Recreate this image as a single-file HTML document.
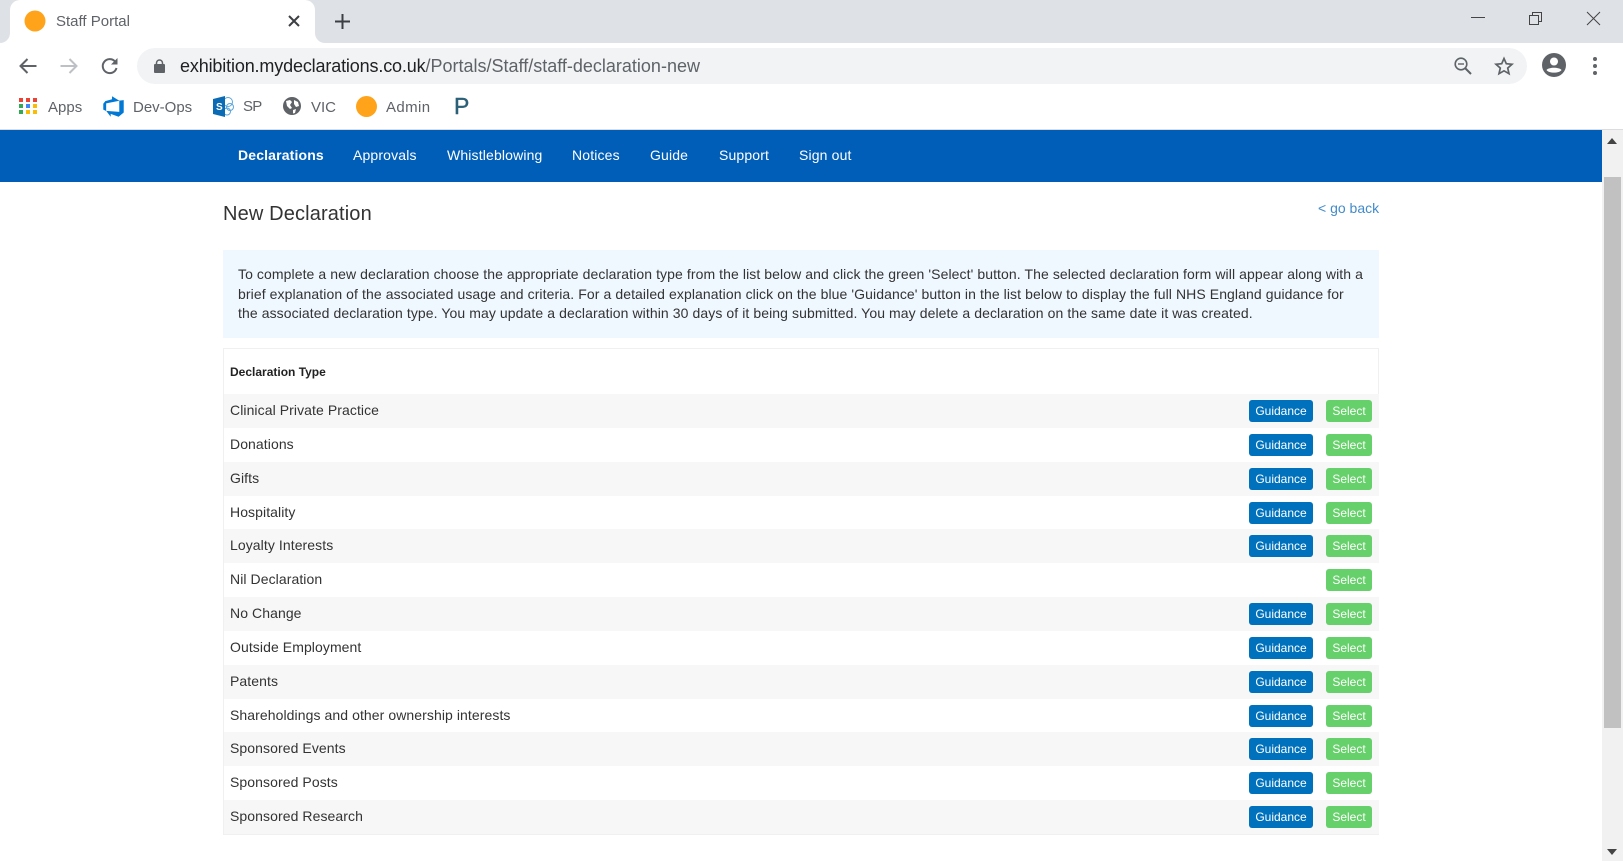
<!DOCTYPE html>
<html lang="en">
<head>
<meta charset="utf-8">
<title>Staff Portal</title>
<style>
html,body{margin:0;padding:0;width:1623px;height:861px;overflow:hidden;background:#fff;font-family:"Liberation Sans",sans-serif;color:#333}
body{filter:blur(.3px)}
.a{position:absolute;white-space:nowrap}
a{text-decoration:none;color:inherit}
#strip{left:0;top:0;width:1623px;height:43px;background:#dee1e6}
#tab{left:10px;top:0;width:305px;height:43px;background:#fff;border-radius:10px 10px 0 0}
#omni{left:137px;top:48px;width:1390px;height:36px;border-radius:18px;background:#f1f3f4}
#url{left:180px;top:55px;font-size:18px;line-height:22px;color:#5f6368}
#url b{font-weight:normal;color:#202124;letter-spacing:-.15px}
.bm{top:97.500px;font-size:15px;line-height:20px;color:#5f6368}
#nav{left:0;top:130px;width:1602px;height:52px;background:#005eb8}
#nav a{position:absolute;top:0;line-height:50px;font-size:14px;letter-spacing:.15px;color:#fff;white-space:nowrap}
#scroll{left:1602px;top:130px;width:21px;height:731px;background:#f1f1f1}
#thumb{left:1604px;top:177px;width:17px;height:551px;background:#c1c1c1}
h1{position:absolute;left:223px;top:200.500px;margin:0;font-size:20px;line-height:26px;letter-spacing:.14px;font-weight:normal;color:#333;white-space:nowrap}
#back{left:1318px;top:199px;font-size:14px;line-height:18px;color:#428bca}
#alert{left:223px;top:250px;width:1156px;height:88px;background:#eff7ff}
#alert div{position:absolute;left:15px;font-size:14px;line-height:20px;letter-spacing:.086px;white-space:nowrap;color:#333}
#tbl{left:223px;top:348px;width:1156px;height:487px;border:1px solid #f0f0f0;box-sizing:border-box}
#th{left:230px;top:363.500px;font-size:12px;line-height:16px;font-weight:bold;color:#222}
.r{position:absolute;left:0;width:1155px;height:34px;font-size:14px;line-height:33px;color:#333}
.r span{position:absolute;left:6px;white-space:nowrap;letter-spacing:.08px}
.g,.s{position:absolute;top:6px;height:22px;line-height:22px;font-size:12px;color:#fff;text-align:center;border-radius:3px}
.g{left:1025px;width:64px;background:#0071bc}
.s{left:1102px;width:46px;background:#66d06a}
svg{position:absolute;overflow:visible}
</style>
</head>
<body>
<div class="a" id="strip"></div>
<div class="a" id="tab"></div>
<svg style="left:0;top:0" width="10" height="43"><path d="M0 43h10V33a10 10 0 0 1-10 10z" fill="#fff"/></svg>
<svg style="left:315px;top:33px" width="10" height="10"><path d="M0 0a10 10 0 0 0 10 10H0z" fill="#fff"/></svg>
<svg style="left:24px;top:10px" width="22" height="22"><circle cx="11" cy="11" r="10.500" fill="#ffa31a"/></svg>
<div class="a" style="left:56px;top:12px;font-size:15px;line-height:20px;color:#5f6368">Staff Portal</div>
<svg style="left:288px;top:15px" width="12" height="12"><path d="M1 1l10 10M11 1L1 11" stroke="#3c4043" stroke-width="2"/></svg>
<svg style="left:335px;top:14px" width="15" height="15"><path d="M7.500 0v15M0 7.500h15" stroke="#3c4043" stroke-width="2"/></svg>
<svg style="left:1471px;top:17px" width="14" height="2"><path d="M0 .5h14" stroke="#444" stroke-width="1"/></svg>
<svg style="left:1529px;top:12px" width="13" height="13"><path d="M.5 3.500h9v9h-9zM3.500 3.500v-3h9v9h-3" fill="none" stroke="#444"/></svg>
<svg style="left:1587px;top:12px" width="13" height="13"><path d="M0 0l13 13M13 0L0 13" stroke="#444" stroke-width="1"/></svg>

<svg style="left:19px;top:57px" width="18" height="18"><path d="M17.500 9H2M8.500 2L1.500 9l7 7" fill="none" stroke="#5f6368" stroke-width="2"/></svg>
<svg style="left:60px;top:57px" width="18" height="18"><path d="M.5 9H16M9.500 2l7 7-7 7" fill="none" stroke="#bdc1c6" stroke-width="2"/></svg>
<svg style="left:101px;top:57px" width="18" height="18"><path d="M15.500 11a7 7 0 1 1-1.500-6.500" fill="none" stroke="#5f6368" stroke-width="2"/><path d="M16.500 1v6.500H10z" fill="#5f6368"/></svg>
<div class="a" id="omni"></div>
<svg style="left:154px;top:59px" width="11" height="14"><path d="M2.500 5.500V4a3 3 0 0 1 6 0v1.500" fill="none" stroke="#5f6368" stroke-width="1.500"/><rect x="0" y="5" width="11" height="9" rx="1" fill="#5f6368"/></svg>
<div class="a" id="url"><b>exhibition.mydeclarations.co.uk</b>/Portals/Staff/staff-declaration-new</div>
<svg style="left:1454px;top:57px" width="18" height="18"><circle cx="7" cy="7" r="5.800" fill="none" stroke="#5f6368" stroke-width="1.600"/><path d="M4 7h6" stroke="#5f6368" stroke-width="1.400"/><path d="M11 11l6 6" stroke="#5f6368" stroke-width="2"/></svg>
<svg style="left:1495px;top:57px" width="18" height="18"><path d="M9 1.500l2.300 5.200 5.700.6-4.300 3.800 1.300 5.600L9 13.800l-5 2.900 1.300-5.600L1 7.300l5.700-.6z" fill="none" stroke="#5f6368" stroke-width="1.700"/></svg>
<svg style="left:1542px;top:53px" width="24" height="24"><circle cx="12" cy="12" r="12" fill="#5f6368"/><circle cx="12" cy="8.500" r="4" fill="#fff"/><path d="M4.500 17c2-3 13-3 15 0-2 3.500-13 3.500-15 0z" fill="#fff"/></svg>
<svg style="left:1593px;top:57px" width="4" height="18"><circle cx="2" cy="2" r="2" fill="#5f6368"/><circle cx="2" cy="9" r="2" fill="#5f6368"/><circle cx="2" cy="16" r="2" fill="#5f6368"/></svg>

<svg style="left:19px;top:98px" width="18" height="16"><rect x="0" y="0" width="4" height="4" fill="#ea4335"/><rect x="7" y="0" width="4" height="4" fill="#ea4335"/><rect x="14" y="0" width="4" height="4" fill="#ea4335"/><rect x="0" y="6" width="4" height="4" fill="#34a853"/><rect x="7" y="6" width="4" height="4" fill="#4285f4"/><rect x="14" y="6" width="4" height="4" fill="#fbbc05"/><rect x="0" y="12" width="4" height="4" fill="#34a853"/><rect x="7" y="12" width="4" height="4" fill="#fbbc05"/><rect x="14" y="12" width="4" height="4" fill="#fbbc05"/></svg>
<div class="a bm" style="left:48px">Apps</div>
<svg style="left:102px;top:95px" width="23" height="23" viewBox="0 0 18 18"><path d="M17 4v9.740l-4 3.280-6.200-2.260V17l-3.510-4.590 10.230.8V4.440L17 4zm-3.410.49L7.850 1v2.290L2.580 4.840 1 6.870v4.610l2.260 1V6.570l10.330-2.080z" fill="#0078d4"/></svg>
<div class="a bm" style="left:133px">Dev-Ops</div>
<svg style="left:213px;top:96px" width="21" height="21"><circle cx="15" cy="6" r="4.500" fill="none" stroke="#5aa6dc"/><circle cx="17" cy="11" r="3.500" fill="none" stroke="#5aa6dc"/><circle cx="14" cy="15.500" r="3.500" fill="none" stroke="#5aa6dc"/><path d="M0 3l12-3v21L0 18z" fill="#0b6ab4"/><text x="3" y="14" font-family="Liberation Sans" font-size="10" font-weight="bold" fill="#fff">S</text></svg>
<div class="a bm" style="left:243px;top:96.500px;font-size:15px;letter-spacing:-.8px">SP</div>
<svg style="left:283px;top:97px" width="18" height="18"><circle cx="9" cy="9" r="9" fill="#5f6368"/><path d="M3 4l4-1 2 2-2 3 2 3-2 1-3-3zM11 3l4 2 1 4-3 1-2-3zM10 13l3-1-1 4-2 .5z" fill="#fff"/></svg>
<div class="a bm" style="left:311px">VIC</div>
<svg style="left:356px;top:96px" width="21" height="21"><circle cx="10.500" cy="10.500" r="10.500" fill="#ffa31a"/></svg>
<div class="a bm" style="left:386px;letter-spacing:.4px">Admin</div>
<div class="a" style="left:454px;top:93px;font-size:23px;line-height:26px;color:#2a6078;-webkit-text-stroke:.4px #2a6078">P</div>
<div class="a" style="left:0;top:129px;width:1623px;height:1px;background:#dadce0"></div>

<div class="a" id="nav">
<a href="#" style="left:238px;font-weight:bold">Declarations</a>
<a href="#" style="left:353px">Approvals</a>
<a href="#" style="left:447px">Whistleblowing</a>
<a href="#" style="left:572px">Notices</a>
<a href="#" style="left:650px">Guide</a>
<a href="#" style="left:719px">Support</a>
<a href="#" style="left:799px">Sign out</a>
</div>
<div class="a" id="scroll"></div>
<div class="a" id="thumb"></div>
<svg style="left:1607px;top:138px" width="10" height="6"><path d="M0 6L5 0l5 6z" fill="#444"/></svg>
<svg style="left:1607px;top:849px" width="10" height="6"><path d="M0 0l5 6 5-6z" fill="#444"/></svg>

<h1>New Declaration</h1>
<a class="a" id="back" href="#">&lt; go back</a>

<div class="a" id="alert">
<div style="top:14px">To complete a new declaration choose the appropriate declaration type from the list below and click the green 'Select' button. The selected declaration form will appear along with a</div>
<div style="top:34px">brief explanation of the associated usage and criteria. For a detailed explanation click on the blue 'Guidance' button in the list below to display the full NHS England guidance for</div>
<div style="top:53px">the associated declaration type. You may update a declaration within 30 days of it being submitted. You may delete a declaration on the same date it was created.</div>
</div>

<div class="a" id="tbl"></div>
<div class="a" id="th">Declaration Type</div>
<div class="a" style="left:224px;top:394px;width:1155px;height:440px">
<div class="r" style="top:0;background:#f7f7f7"><span>Clinical Private Practice</span><a class="g" href="#">Guidance</a><a class="s" href="#">Select</a></div>
<div class="r" style="top:34px;background:#fff"><span>Donations</span><a class="g" href="#">Guidance</a><a class="s" href="#">Select</a></div>
<div class="r" style="top:68px;background:#f7f7f7"><span>Gifts</span><a class="g" href="#">Guidance</a><a class="s" href="#">Select</a></div>
<div class="r" style="top:102px;background:#fff"><span>Hospitality</span><a class="g" href="#">Guidance</a><a class="s" href="#">Select</a></div>
<div class="r" style="top:135px;background:#f7f7f7"><span>Loyalty Interests</span><a class="g" href="#">Guidance</a><a class="s" href="#">Select</a></div>
<div class="r" style="top:169px;background:#fff"><span>Nil Declaration</span><a class="s" href="#">Select</a></div>
<div class="r" style="top:203px;background:#f7f7f7"><span>No Change</span><a class="g" href="#">Guidance</a><a class="s" href="#">Select</a></div>
<div class="r" style="top:237px;background:#fff"><span>Outside Employment</span><a class="g" href="#">Guidance</a><a class="s" href="#">Select</a></div>
<div class="r" style="top:271px;background:#f7f7f7"><span>Patents</span><a class="g" href="#">Guidance</a><a class="s" href="#">Select</a></div>
<div class="r" style="top:305px;background:#fff"><span>Shareholdings and other ownership interests</span><a class="g" href="#">Guidance</a><a class="s" href="#">Select</a></div>
<div class="r" style="top:338px;background:#f7f7f7"><span>Sponsored Events</span><a class="g" href="#">Guidance</a><a class="s" href="#">Select</a></div>
<div class="r" style="top:372px;background:#fff"><span>Sponsored Posts</span><a class="g" href="#">Guidance</a><a class="s" href="#">Select</a></div>
<div class="r" style="top:406px;background:#f7f7f7"><span>Sponsored Research</span><a class="g" href="#">Guidance</a><a class="s" href="#">Select</a></div>
</div>
</body>
</html>
